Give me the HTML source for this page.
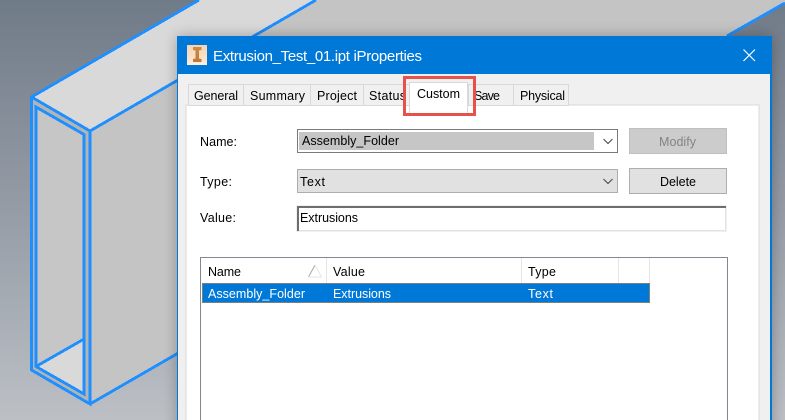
<!DOCTYPE html>
<html><head><meta charset="utf-8">
<style>
html,body{margin:0;padding:0;width:785px;height:420px;overflow:hidden;background:#888}
svg{display:block}
text{font-family:"Liberation Sans",sans-serif;font-size:12.5px;fill:#000}
</style></head>
<body>
<svg width="785" height="420" viewBox="0 0 785 420" xmlns="http://www.w3.org/2000/svg">
<defs>
<linearGradient id="bg" x1="0" y1="0" x2="0" y2="1"><stop offset="0" stop-color="#707b88"/><stop offset=".5" stop-color="#959ca6"/><stop offset="1" stop-color="#bcc0c5"/></linearGradient>
<linearGradient id="ic" x1="0" y1="0" x2="0" y2="1"><stop offset="0" stop-color="#f8d4b0"/><stop offset=".7" stop-color="#fbe3cc"/><stop offset="1" stop-color="#fdf0e4"/></linearGradient>
<linearGradient id="ii" x1="0" y1="0" x2="0" y2="1"><stop offset="0" stop-color="#d08a45"/><stop offset="1" stop-color="#c07a35"/></linearGradient>
<filter id="sh" x="-10%" y="-10%" width="120%" height="120%"><feGaussianBlur stdDeviation="7"/></filter>
</defs>
<rect width="785" height="420" fill="url(#bg)"/>
<!-- 3D part -->
<polygon points="90,131 316,0 785,0 785,3 90,404" fill="#c4c4c4"/>
<polygon points="31,97 199,0 316,0 90,131" fill="#d9d9d9"/>
<polygon points="31,97 90,131 90,404 31,370" fill="#b4b4b4"/>
<polygon points="36,107 84,134 84,394 36,366" fill="#c6c6c6"/>
<polygon points="36,366 84,339 84,394" fill="#d9d9d9"/>
<g fill="none" stroke="#1e8fff" stroke-width="2.900" shape-rendering="crispEdges">
<path d="M199,0L31.500,97V370L90,404V131L31.500,97"/>
<path d="M90,131L316,0"/>
<path d="M90,404L200,340.500"/>
<path d="M36,107L84,134.500V394L36,366.500Z"/>
<path d="M36,366.500L84,339"/>
<path d="M785,3L727,36"/>
</g>
<!-- dialog shadow -->
<rect x="177" y="36" width="595" height="420" fill="#000" opacity=".28" filter="url(#sh)"/>
<!-- dialog -->
<g shape-rendering="crispEdges">
<rect x="177" y="36" width="595" height="400" fill="#0078d7"/>
<rect x="178" y="74" width="592" height="360" fill="#f0f0f0"/>
<rect x="186" y="105" width="573" height="330" fill="#fff" stroke="#d9d9d9"/>
<!-- tabs -->
<g fill="#f0f0f0" stroke="#d9d9d9">
<rect x="188.500" y="84.500" width="55" height="21"/>
<rect x="243.500" y="84.500" width="67" height="21"/>
<rect x="310.500" y="84.500" width="53" height="21"/>
<rect x="363.500" y="84.500" width="46" height="21"/>
<rect x="468.500" y="84.500" width="45" height="21"/>
<rect x="513.500" y="84.500" width="55" height="21"/>
</g>
</g>
<text x="194" y="100" textLength="44">General</text>
<text x="250" y="100" textLength="55">Summary</text>
<text x="317" y="100" textLength="40">Project</text>
<text x="369" y="100" textLength="37">Status</text>
<text x="474" y="100" textLength="26">Save</text>
<text x="520" y="100" textLength="45">Physical</text>
<g shape-rendering="crispEdges">
<rect x="409.500" y="82.500" width="58" height="30" fill="#fff" stroke="#d9d9d9"/>
<rect x="410" y="104" width="57" height="10" fill="#fff"/>
</g>
<text x="417" y="98" textLength="43">Custom</text>
<!-- title -->
<rect x="187" y="45" width="20" height="20" fill="url(#ic)"/>
<path d="M193,47H201.500V50L199,50.500V58.500L201.500,59V62H193V59L195.500,58.500V50.500L193,50Z" fill="url(#ii)"/>
<text x="213" y="61" textLength="209" style="font-size:15px;fill:#fff">Extrusion_Test_01.ipt iProperties</text>
<path d="M743.500,49.500L755,61M755,49.500L743.500,61" stroke="#fff" stroke-width="1.200" fill="none"/>
<!-- red -->
<rect x="404.500" y="77.500" width="70" height="37" fill="none" stroke="#e8504a" stroke-width="3" shape-rendering="crispEdges"/>
<!-- form labels -->
<text x="200" y="146" textLength="37">Name:</text>
<text x="200" y="186" textLength="32">Type:</text>
<text x="200" y="222" textLength="36">Value:</text>
<g shape-rendering="crispEdges">
<rect x="297.500" y="129.500" width="320" height="23" fill="#fff" stroke="#7a7a7a"/>
<rect x="299" y="132" width="295" height="18" fill="#c6c6c6"/>
<rect x="297.500" y="169.500" width="320" height="23" fill="#e1e1e1" stroke="#adadad"/>
<rect x="296.500" y="205.500" width="430" height="26" fill="#fff" stroke="#f0f0f0"/>
<rect x="297.500" y="206.500" width="428" height="24" fill="#fff" stroke="#e3e3e3"/>
<rect x="297" y="206" width="429" height="2" fill="#6e6e6e"/>
<rect x="297" y="206" width="2" height="25" fill="#6e6e6e"/>
<rect x="629.500" y="128.500" width="97" height="25" fill="#cccccc" stroke="#bfbfbf"/>
<rect x="629.500" y="168.500" width="97" height="25" fill="#e1e1e1" stroke="#adadad"/>
</g>
<path d="M603.500,139L608,143.500L612.500,139" fill="none" stroke="#444" stroke-width="1"/>
<path d="M603.500,179L608,183.500L612.500,179" fill="none" stroke="#444" stroke-width="1"/>
<text x="302" y="145" textLength="97">Assembly_Folder</text>
<text x="300" y="186" textLength="25">Text</text>
<text x="300" y="222" textLength="58">Extrusions</text>
<text x="659" y="146" textLength="37" style="fill:#838383">Modify</text>
<text x="660" y="186" textLength="36">Delete</text>
<!-- list -->
<g shape-rendering="crispEdges">
<rect x="200.500" y="257.500" width="527" height="180" fill="#fff" stroke="#828790"/>
<rect x="326" y="258" width="1" height="25" fill="#e5e5e5"/>
<rect x="521" y="258" width="1" height="25" fill="#e5e5e5"/>
<rect x="618" y="258" width="1" height="25" fill="#e5e5e5"/>
<rect x="649" y="258" width="1" height="25" fill="#e5e5e5"/>
<rect x="202" y="283" width="448" height="20" fill="#0078d7"/>
<rect x="202.500" y="283.500" width="447" height="19" fill="none" stroke="#f08a24" stroke-dasharray="1 1"/>
</g>
<path d="M308.500,277L315,265" stroke="#a8a8a8" fill="none"/>
<path d="M315,265L321.500,277H308.500" stroke="#e4e4e4" fill="none"/>
<text x="208" y="276" textLength="33">Name</text>
<text x="333" y="276" textLength="32">Value</text>
<text x="528" y="276" textLength="28">Type</text>
<text x="208" y="298" textLength="97" style="fill:#fff">Assembly_Folder</text>
<text x="333" y="298" textLength="58" style="fill:#fff">Extrusions</text>
<text x="528" y="298" textLength="25" style="fill:#fff">Text</text>
</svg>
</body></html>
